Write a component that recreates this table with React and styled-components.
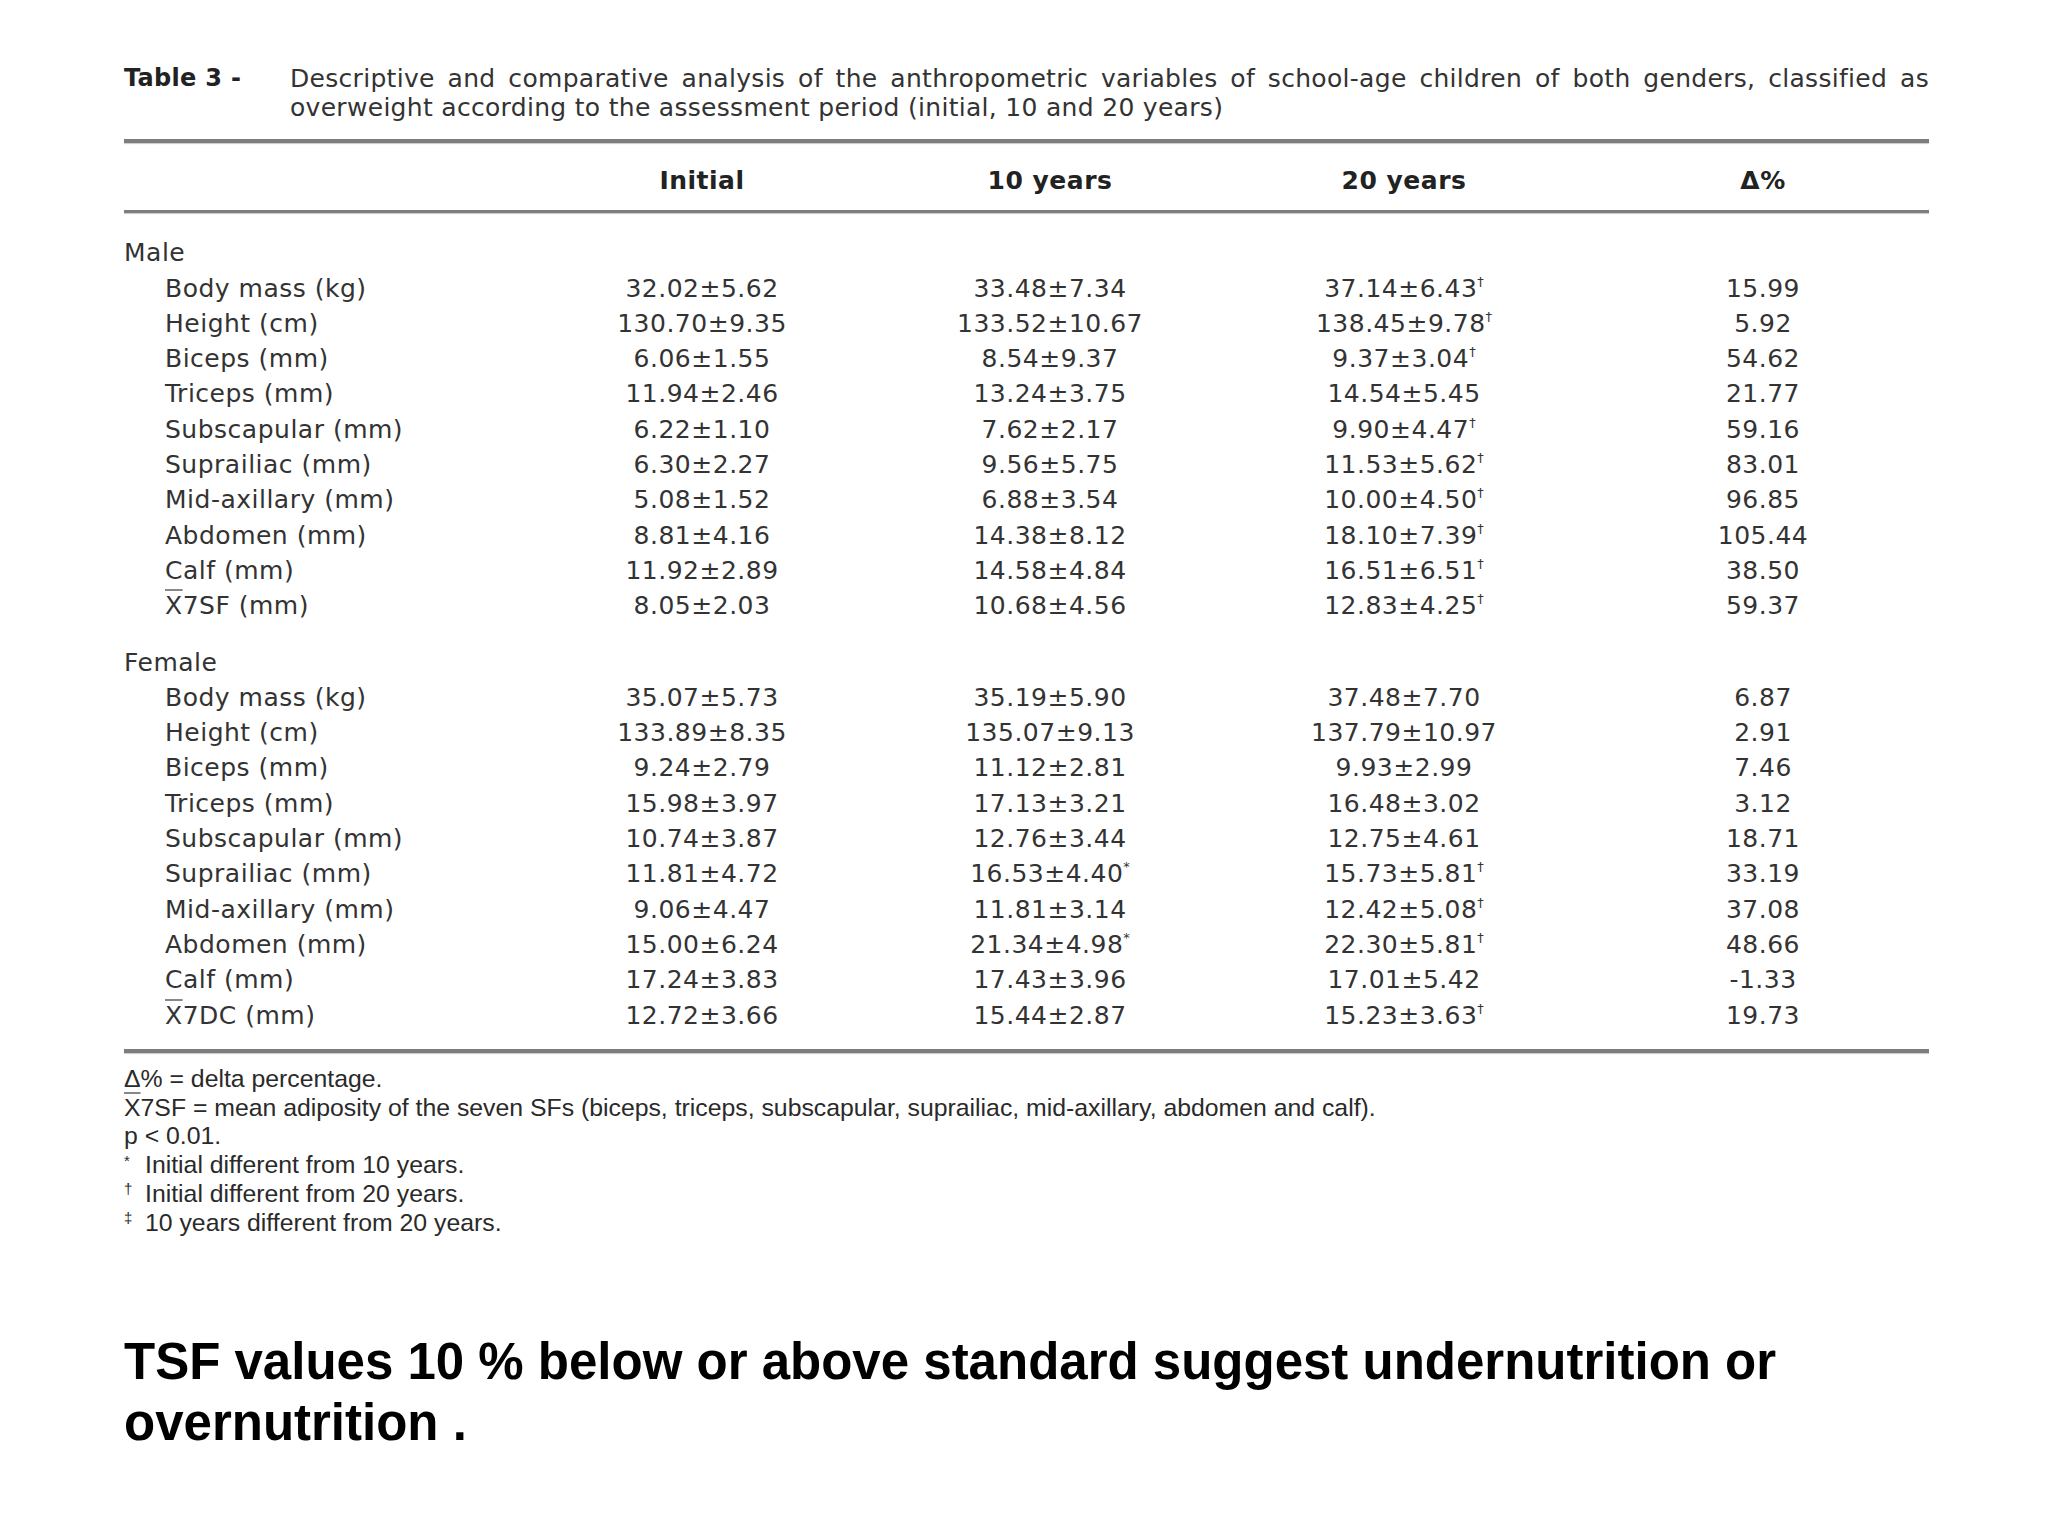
import React from 'react';
import styled, { createGlobalStyle } from 'styled-components';

const GlobalStyle = createGlobalStyle`
  html, body {
    margin: 0;
    padding: 0;
    background: #fff;
  }
`;

const Page = styled.div`
  width: 2048px;
  min-height: 1536px;
  padding: 64px 0 0 124px;
  box-sizing: border-box;
`;

const Sheet = styled.div`
  width: 1805px;
  font-family: "DejaVu Sans", Verdana, sans-serif;
  color: #333;
`;

const Caption = styled.div`
  display: flex;
  font-size: 25px;
  line-height: 29px;
  letter-spacing: 0.3px;
`;

const CaptionTitle = styled.div`
  flex: 0 0 166px;
  font-weight: bold;
  font-size: 24px;
  color: #222;
`;

const CaptionText = styled.div`
  flex: 1;
  text-align: justify;
`;

const Rule = styled.div`
  height: ${p => p.$thick ? 4 : 3}px;
  background: #7d7d7d;
  box-shadow: 0 1px 1px #c8c8c8;
  margin-top: ${p => p.$top || 0}px;
`;

const Grid = styled.div`
  display: grid;
  grid-template-columns: 403px 350px 346px 362px 344px;
  font-size: 25px;
  line-height: 35.3px;
  letter-spacing: 0.5px;
`;

const HeadCell = styled.div`
  padding: 20px 0 12px;
  font-weight: bold;
  text-align: center;
  color: #222;
  padding-left: ${p => p.$shift ? 12 : 0}px;
`;

const Body = styled.div`
  padding: 22px 0 16px;
`;

const GroupLabel = styled.div`
  grid-column: 1 / -1;
  margin-top: ${p => p.$gap ? 21 : 0}px;
`;

const Label = styled.div`
  padding-left: 41px;
  white-space: nowrap;
`;

const Value = styled.div`
  text-align: center;
  white-space: nowrap;
  padding-left: ${p => p.$shift ? 12 : 0}px;
`;

const Mark = styled.sup`
  font-size: 13px;
  line-height: 0;
  vertical-align: 11px;
  letter-spacing: 0;
`;

const Bar = styled.span`
  text-decoration: overline;
  text-decoration-color: #888;
`;

const Notes = styled.div`
  padding-top: 12px;
  font-family: "Liberation Sans", Arial, sans-serif;
  font-size: 24.8px;
  line-height: 28.8px;
  color: #2a2a2a;
`;

const NoteLine = styled.div`
  display: flex;
  white-space: nowrap;
`;

const NoteSym = styled.span`
  width: 21px;
  font-size: 15px;
  line-height: 0;
  position: relative;
  top: -5px;
  align-self: center;
`;

const Summary = styled.p`
  margin: 93px 0 0;
  width: 1700px;
  font-family: "Liberation Sans", Arial, sans-serif;
  font-weight: bold;
  font-size: 51px;
  line-height: 61px;
  color: #000;
`;

const heads = ['Initial', '10 years', '20 years', 'Δ%'];

const groups = [
  {
    name: 'Male',
    rows: [
      ['Body mass (kg)', '32.02±5.62', '33.48±7.34', '37.14±6.43†', '15.99'],
      ['Height (cm)', '130.70±9.35', '133.52±10.67', '138.45±9.78†', '5.92'],
      ['Biceps (mm)', '6.06±1.55', '8.54±9.37', '9.37±3.04†', '54.62'],
      ['Triceps (mm)', '11.94±2.46', '13.24±3.75', '14.54±5.45', '21.77'],
      ['Subscapular (mm)', '6.22±1.10', '7.62±2.17', '9.90±4.47†', '59.16'],
      ['Suprailiac (mm)', '6.30±2.27', '9.56±5.75', '11.53±5.62†', '83.01'],
      ['Mid-axillary (mm)', '5.08±1.52', '6.88±3.54', '10.00±4.50†', '96.85'],
      ['Abdomen (mm)', '8.81±4.16', '14.38±8.12', '18.10±7.39†', '105.44'],
      ['Calf (mm)', '11.92±2.89', '14.58±4.84', '16.51±6.51†', '38.50'],
      ['X|7SF (mm)', '8.05±2.03', '10.68±4.56', '12.83±4.25†', '59.37'],
    ],
  },
  {
    name: 'Female',
    rows: [
      ['Body mass (kg)', '35.07±5.73', '35.19±5.90', '37.48±7.70', '6.87'],
      ['Height (cm)', '133.89±8.35', '135.07±9.13', '137.79±10.97', '2.91'],
      ['Biceps (mm)', '9.24±2.79', '11.12±2.81', '9.93±2.99', '7.46'],
      ['Triceps (mm)', '15.98±3.97', '17.13±3.21', '16.48±3.02', '3.12'],
      ['Subscapular (mm)', '10.74±3.87', '12.76±3.44', '12.75±4.61', '18.71'],
      ['Suprailiac (mm)', '11.81±4.72', '16.53±4.40*', '15.73±5.81†', '33.19'],
      ['Mid-axillary (mm)', '9.06±4.47', '11.81±3.14', '12.42±5.08†', '37.08'],
      ['Abdomen (mm)', '15.00±6.24', '21.34±4.98*', '22.30±5.81†', '48.66'],
      ['Calf (mm)', '17.24±3.83', '17.43±3.96', '17.01±5.42', '-1.33'],
      ['X|7DC (mm)', '12.72±3.66', '15.44±2.87', '15.23±3.63†', '19.73'],
    ],
  },
];

// "X|rest" puts a bar over the X (mean sign)
const renderLabel = text => {
  if (text.includes('|')) {
    const [x, rest] = text.split('|');
    return <><Bar>{x}</Bar>{rest}</>;
  }
  return text;
};

const renderValue = text => {
  const last = text.slice(-1);
  if (last === '†' || last === '*') {
    return <>{text.slice(0, -1)}<Mark>{last}</Mark></>;
  }
  return text;
};

const notes = [
  [null, <>Δ% = delta percentage.</>],
  [null, <><Bar>X</Bar>7SF = mean adiposity of the seven SFs (biceps, triceps, subscapular, suprailiac, mid-axillary, abdomen and calf).</>],
  [null, <>p &lt; 0.01.</>],
  ['*', <>Initial different from 10 years.</>],
  ['†', <>Initial different from 20 years.</>],
  ['‡', <>10 years different from 20 years.</>],
];

const App = () => (
  <Page>
    <GlobalStyle />
    <Sheet>
      <Caption>
        <CaptionTitle>Table 3 -</CaptionTitle>
        <CaptionText>
          Descriptive and comparative analysis of the anthropometric variables of school-age children of both genders, classified as overweight according to the assessment period (initial, 10 and 20 years)
        </CaptionText>
      </Caption>

      <Rule $thick $top={17} />
      <Grid>
        <HeadCell />
        {heads.map((h, i) => (
          <HeadCell key={h} $shift={i === 3}>{h}</HeadCell>
        ))}
      </Grid>
      <Rule />

      <Body>
        <Grid>
          {groups.map((g, gi) => (
            <React.Fragment key={g.name}>
              <GroupLabel $gap={gi > 0}>{g.name}</GroupLabel>
              {g.rows.map(r => (
                <React.Fragment key={g.name + r[0]}>
                  <Label>{renderLabel(r[0])}</Label>
                  {r.slice(1).map((v, i) => (
                    <Value key={i} $shift={i === 3}>{renderValue(v)}</Value>
                  ))}
                </React.Fragment>
              ))}
            </React.Fragment>
          ))}
        </Grid>
      </Body>
      <Rule $thick />

      <Notes>
        {notes.map(([sym, text], i) => (
          <NoteLine key={i}>
            {sym && <NoteSym>{sym}</NoteSym>}
            <span>{text}</span>
          </NoteLine>
        ))}
      </Notes>
    </Sheet>

    <Summary>
      TSF values 10 % below or above standard suggest undernutrition or overnutrition .
    </Summary>
  </Page>
);

export default App;
